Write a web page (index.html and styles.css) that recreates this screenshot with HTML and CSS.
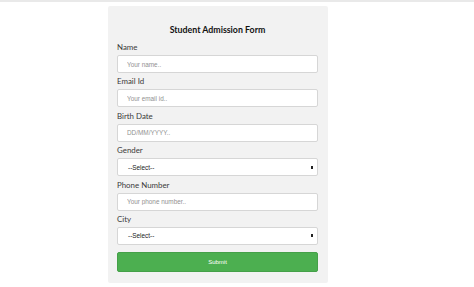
FILE: index.html
```html
<!DOCTYPE html>
<html>
<head>
<meta charset="utf-8">
<link rel="stylesheet" href="styles.css">
</head>
<body>
<div class="topbar"></div>
<div class="page">
  <form class="card">
    <h1 class="title">Student Admission Form</h1>
    <label class="label">Name</label>
    <input class="field" type="text" placeholder="Your name..">
    <label class="label">Email Id</label>
    <input class="field" type="text" placeholder="Your email id..">
    <label class="label">Birth Date</label>
    <input class="field" type="text" placeholder="DD/MM/YYYY..">
    <label class="label">Gender</label>
    <div class="select"><span>--Select--</span><span class="dot"></span></div>
    <label class="label">Phone Number</label>
    <input class="field" type="text" placeholder="Your phone number..">
    <label class="label">City</label>
    <div class="select"><span>--Select--</span><span class="dot"></span></div>
    <button class="submit" type="button">Submit</button>
  </form>
</div>
</body>
</html>
```
FILE: styles.css
```css
html, body {
  margin: 0;
  padding: 0;
  background: #ffffff;
}
.topbar {
  height: 2px;
  background: #e9e9e9;
}
.page {
  padding: 4px 0 0 108px;
}
.card {
  width: 201px;
  padding: 17px 10px 11px 9px;
  background: #f2f2f2;
  border-radius: 2px;
  display: flex;
  flex-direction: column;
  font-family: "Open Sans", "Liberation Sans", sans-serif;
}
.title {
  margin: 0 0 6px 0;
  text-align: center;
  font-family: Lato, "Open Sans", sans-serif;
  font-size: 8.8px;
  font-weight: 700;
  color: #111;
  line-height: 13px;
  height: 13px;
}
.label {
  font-family: Lato, "Open Sans", sans-serif;
  font-size: 7.9px;
  color: #3a3a3a;
  line-height: 10px;
  height: 10px;
  margin-bottom: 3px;
}
.field {
  box-sizing: border-box;
  height: 18px;
  margin: 0 0 3.4px 0;
  padding: 0 9px;
  border: 1px solid #d6d6d6;
  border-radius: 2px;
  background: #fff;
  font-family: "Liberation Sans", sans-serif;
  font-size: 6.4px;
  outline: none;
  flex: none;
}
.field::placeholder {
  color: #929292;
}
.select {
  box-sizing: border-box;
  height: 18px;
  margin: 0 0 3.4px 0;
  padding: 0 4px 0 10px;
  border: 1px solid #d6d6d6;
  border-radius: 2px;
  background: #fff;
  display: flex;
  align-items: center;
  justify-content: space-between;
  font-family: "Liberation Sans", sans-serif;
  font-size: 6.4px;
  color: #222;
  flex: none;
}
.dot {
  width: 2px;
  height: 3px;
  background: #222;
}
.submit {
  margin-top: 3.6px;
  height: 20px;
  border: 1px solid #45a049;
  border-radius: 2px;
  background: #4caf50;
  color: #fff;
  font-family: "Liberation Sans", sans-serif;
  font-size: 6px;
  padding: 0;
  flex: none;
}
```
